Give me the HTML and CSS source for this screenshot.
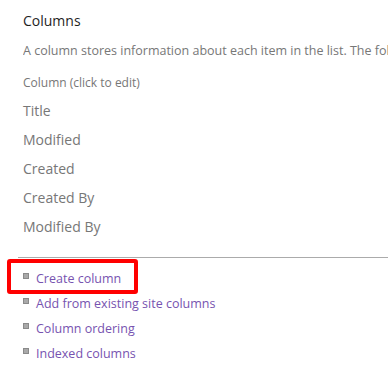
FILE: index.html
```html
<!DOCTYPE html>
<html lang="en">
<head>
  <meta charset="UTF-8" />
  <title>Columns</title>
  <link rel="stylesheet" href="styles.css">
</head>
<body>

  <div class="section">
    <h2>Columns</h2>
    <p class="desc">A column stores information about each item in the list. The following columns are currently available in this list:</p>

    <div class="col-head">Column (click to edit)</div>
    <ul class="col-list">
      <li>Title</li>
      <li>Modified</li>
      <li>Created</li>
      <li>Created By</li>
      <li>Modified By</li>
    </ul>
  </div>

  <div class="links">
    <div class="highlight"></div>
    <ul>
      <li><a href="#">Create column</a></li>
      <li><a href="#">Add from existing site columns</a></li>
      <li><a href="#">Column ordering</a></li>
      <li><a href="#">Indexed columns</a></li>
    </ul>
  </div>

</body>
</html>
```

FILE: styles.css
```css
body {
  margin: 0;
  background: #fff;
  font-family: "Open Sans", "Noto Sans", sans-serif;
  overflow: hidden;
}

.section {
  padding: 10px 0 0 23px;
}

h2 {
  margin: 0;
  font-size: 14px;
  font-weight: normal;
  line-height: 21px;
  color: #1f1f1f;
}

.desc {
  margin: 11px 0 0;
  font-size: 12.5px;
  line-height: 18px;
  color: #777;
  white-space: nowrap;
  overflow: hidden;
}

.col-head {
  margin-top: 15px;
  font-size: 12px;
  line-height: 16px;
  color: #777;
}

.col-list {
  list-style: none;
  margin: 5px 0 0;
  padding: 0;
}

.col-list li {
  font-size: 14px;
  line-height: 29px;
  color: #777;
}

.links {
  position: relative;
  margin: 16px 0 0 18px;
  border-top: 1px solid #ababab;
}

.links ul {
  list-style: none;
  margin: 0;
  padding: 8px 0 0 5px;
}

.links li {
  display: flex;
  align-items: center;
  gap: 7px;
  font-size: 12.5px;
  line-height: 25px;
}

.links li::before {
  content: "";
  width: 4px;
  height: 4px;
  background: #a9a9a9;
  border: 1px solid #8a8a8a;
  margin-top: -5px;
}

.links a {
  color: #7753b0;
  text-decoration: none;
}

.highlight {
  position: absolute;
  left: -11px;
  top: 1px;
  width: 123px;
  height: 27px;
  border: 4px solid #ff0000;
  border-radius: 3px;
}
```
